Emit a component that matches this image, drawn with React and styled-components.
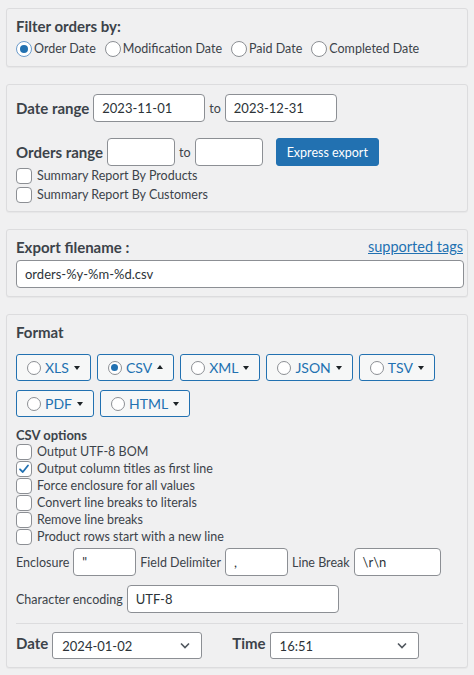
import React from "react";
import styled, { createGlobalStyle } from "styled-components";

const Global = createGlobalStyle`
  html, body { margin: 0; padding: 0; background: #f0f0f1; }
  body { font-family: Lato, "Noto Sans", sans-serif; color: #3c434a; font-size: 12.5px; }
  * { box-sizing: border-box; }
`;

const Page = styled.div`
  padding: 8px 6px 6px;
  display: flex;
  flex-direction: column;
  gap: 17px;
`;

const Panel = styled.section`
  border: 1px solid #dcdcde;
  border-radius: 3px;
  background: #f0f0f1;
  box-shadow: 0 1px 1px rgba(0, 0, 0, 0.04);
  padding: ${(p) => p.$pad || "8px 3px 8px 9px"};
  display: flex;
  flex-direction: column;
`;

const Title = styled.div`
  font-weight: 700;
  font-size: 15px;
  line-height: 18px;
  color: #3c434a;
`;

const Row = styled.div`
  display: flex;
  align-items: center;
  gap: ${(p) => p.$gap || "4px"};
  margin-top: ${(p) => p.$mt || "0"};
`;

const RadioLabel = styled.label`
  display: flex;
  align-items: center;
  gap: 2px;
  margin-right: 9px;
  line-height: 18px;
  font-size: 12.5px;
`;

const RadioCircle = styled.span`
  width: ${(p) => p.$size || 16}px;
  height: ${(p) => p.$size || 16}px;
  border-radius: 50%;
  border: 1px solid ${(p) => (p.$on && p.$ring ? "#6c9ccc" : "#8c8f94")};
  background: #fff;
  display: inline-flex;
  align-items: center;
  justify-content: center;
  flex: none;
  &::after {
    content: "";
    width: ${(p) => (p.$size ? p.$size / 2 : 8)}px;
    height: ${(p) => (p.$size ? p.$size / 2 : 8)}px;
    border-radius: 50%;
    background: #2271b1;
    display: ${(p) => (p.$on ? "block" : "none")};
  }
`;

const Label = styled.span`
  font-weight: ${(p) => (p.$bold ? 700 : 400)};
  font-size: ${(p) => (p.$bold ? "15px" : "12.5px")};
  white-space: nowrap;
`;

const RaisedLabel = styled(Label)`
  align-self: flex-start;
  margin-top: 2px;
  margin-left: ${(p) => p.$ml || 0}px;
`;

const TextInput = styled.div`
  width: ${(p) => p.$w}px;
  height: 28px;
  flex: none;
  background: #fff;
  border: 1px solid #8c8f94;
  border-radius: 4px;
  padding: 0 8px;
  display: flex;
  align-items: center;
  font-size: 13px;
  color: #2c3338;
  white-space: nowrap;
`;

const WideInput = styled(TextInput)`
  width: auto;
  flex: 1;
`;

const PrimaryButton = styled.button`
  height: 28px;
  margin-left: 9px;
  padding: 0 10px;
  background: #2271b1;
  border: 1px solid #2271b1;
  border-radius: 3px;
  color: #fff;
  font-family: inherit;
  font-size: 12.5px;
`;

const CheckRow = styled.label`
  display: flex;
  align-items: center;
  gap: 5px;
  height: ${(p) => p.$h || 19}px;
  font-size: 12.5px;
`;

const Box = styled.span`
  width: 16px;
  height: 16px;
  flex: none;
  border: 1px solid #8c8f94;
  border-radius: 4px;
  background: #fff;
  display: inline-flex;
  align-items: center;
  justify-content: center;
`;

const TitleBar = styled.div`
  display: flex;
  justify-content: space-between;
  align-items: center;
  line-height: 18px;
  padding-right: 1px;
`;

const Link = styled.a`
  color: #2271b1;
  text-decoration: underline;
  font-size: 14.5px;
`;

const Formats = styled.div`
  display: flex;
  flex-wrap: wrap;
  gap: 9px 6px;
  margin-top: 13px;
`;

const FormatBtn = styled.div`
  height: 27px;
  border: 1px solid #2271b1;
  border-radius: 3px;
  background: #f6f7f7;
  color: #2271b1;
  display: flex;
  align-items: center;
  padding: 0 10px 0 10px;
  font-size: 14px;
`;

const FormatName = styled.span`
  margin: 0 5px 0 4px;
`;

const Caret = styled.span`
  width: 0;
  height: 0;
  border-left: 3.5px solid transparent;
  border-right: 3.5px solid transparent;
  ${(p) =>
    p.$up
      ? "border-bottom: 4px solid #1d2327; margin-bottom: 1px;"
      : "border-top: 4px solid #1d2327;"}
`;

const SubTitle = styled.div`
  font-weight: 700;
  font-size: 13px;
  line-height: 16px;
  margin-top: 10px;
`;

const Sep = styled.hr`
  border: 0;
  border-top: 1px solid #dcdcde;
  margin: 10px 1px 8px 0;
`;

const Select = styled.div`
  width: ${(p) => p.$w}px;
  height: 27px;
  flex: none;
  background: #fff;
  border: 1px solid #8c8f94;
  border-radius: 3px;
  padding: 0 11px 0 9px;
  display: flex;
  align-items: center;
  justify-content: space-between;
  font-size: 13px;
  color: #2c3338;
`;

const Check = () => (
  <svg width="12" height="12" viewBox="0 0 12 12">
    <path d="M2 6.3 L4.8 9 L10 2.5" fill="none" stroke="#2271b1" strokeWidth="1.8" strokeLinecap="round" strokeLinejoin="round" />
  </svg>
);

const Chevron = () => (
  <svg width="10" height="7" viewBox="0 0 10 7">
    <path d="M1 1.5 L5 5.5 L9 1.5" fill="none" stroke="#50575e" strokeWidth="1.6" />
  </svg>
);

const formats = [
  { n: "XLS" },
  { n: "CSV", on: true },
  { n: "XML" },
  { n: "JSON" },
  { n: "TSV" },
  { n: "PDF" },
  { n: "HTML" },
];

const csvOpts = [
  ["Output UTF-8 BOM", false],
  ["Output column titles as first line", true],
  ["Force enclosure for all values", false],
  ["Convert line breaks to literals", false],
  ["Remove line breaks", false],
  ["Product rows start with a new line", false],
];

export default function App() {
  return (
    <>
      <Global />
      <Page>
        <Panel>
          <Title>Filter orders by:</Title>
          <Row $mt="5px" $gap="0">
            {["Order Date", "Modification Date", "Paid Date", "Completed Date"].map((t, i) => (
              <RadioLabel key={t}>
                <RadioCircle $on={i === 0} $ring />
                {t}
              </RadioLabel>
            ))}
          </Row>
        </Panel>

        <Panel $pad="9px 3px 7px 9px">
          <Row>
            <Label $bold>Date range</Label>
            <TextInput $w={112}>2023-11-01</TextInput>
            <Label>to</Label>
            <TextInput $w={112}>2023-12-31</TextInput>
          </Row>
          <Row $mt="16px">
            <Label $bold>Orders range</Label>
            <TextInput $w={68} />
            <Label>to</Label>
            <TextInput $w={68} />
            <PrimaryButton>Express export</PrimaryButton>
          </Row>
          <CheckRow>
            <Box />
            Summary Report By Products
          </CheckRow>
          <CheckRow>
            <Box />
            Summary Report By Customers
          </CheckRow>
        </Panel>

        <Panel>
          <TitleBar>
            <Title>Export filename :</Title>
            <Link href="#">supported tags</Link>
          </TitleBar>
          <Row $mt="4px">
            <WideInput>orders-%y-%m-%d.csv</WideInput>
          </Row>
        </Panel>

        <Panel>
          <Title>Format</Title>
          <Formats>
            {formats.map((f) => (
              <FormatBtn key={f.n}>
                <RadioCircle $size={14} $on={f.on} />
                <FormatName>{f.n}</FormatName>
                <Caret $up={f.on} />
              </FormatBtn>
            ))}
          </Formats>
          <SubTitle>CSV options</SubTitle>
          {csvOpts.map(([t, c]) => (
            <CheckRow key={t} $h={17}>
              <Box>{c && <Check />}</Box>
              {t}
            </CheckRow>
          ))}
          <Row $mt="3px">
            <Label>Enclosure</Label>
            <TextInput $w={63}>"</TextInput>
            <Label>Field Delimiter</Label>
            <TextInput $w={63}>,</TextInput>
            <Label>Line Break</Label>
            <TextInput $w={87}>\r\n</TextInput>
          </Row>
          <Row $mt="9px">
            <Label>Character encoding</Label>
            <TextInput $w={212}>UTF-8</TextInput>
          </Row>
          <Sep />
          <Row>
            <RaisedLabel $bold>Date</RaisedLabel>
            <Select $w={150}>
              2024-01-02
              <Chevron />
            </Select>
            <RaisedLabel $bold $ml={26}>Time</RaisedLabel>
            <Select $w={149}>
              16:51
              <Chevron />
            </Select>
          </Row>
        </Panel>
      </Page>
    </>
  );
}
